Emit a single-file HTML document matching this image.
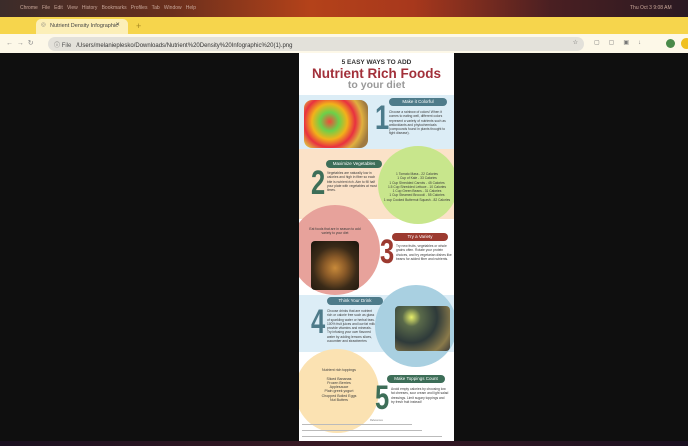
<!DOCTYPE html>
<html><head><meta charset="utf-8"><style>
*{margin:0;padding:0;box-sizing:border-box}
body{width:688px;height:446px;overflow:hidden;background:#0f0f0f;font-family:"Liberation Sans",sans-serif;position:relative}
.a{position:absolute}
.menu{left:0;top:0;width:688px;height:17px;background:linear-gradient(90deg,#3b2c2a 0%,#6a2f1c 25%,#b4421a 45%,#a8381c 60%,#4a1f22 80%,#2a1a22 100%);color:#c9a79a;font-size:5px;}
.tabs{left:0;top:17px;width:688px;height:17px;background:#f6d54c}
.tab{left:36px;top:19px;width:92px;height:15px;background:#fcefb8;border-radius:5px 5px 0 0;font-size:5.5px;color:#444;padding:4px 0 0 14px}
.bar{left:0;top:34px;width:688px;height:19px;background:#fdf8e8}
.url{left:48px;top:37px;width:536px;height:14px;background:#e3e1da;border-radius:7px;font-size:6px;color:#333;padding:3px 0 0 6px}
.pill{border-radius:5px;color:#fff;font-size:4.5px;text-align:center;line-height:8px;height:8px}
.num{font-family:"Liberation Sans",sans-serif;font-weight:bold;font-size:34px;line-height:30px;transform:scaleX(.75);transform-origin:left top}
.t{font-size:3.3px;color:#3a3a3a;line-height:4.3px}
</style></head><body>
<div class="a menu"><span style="position:absolute;left:20px;top:5px">Chrome&nbsp;&nbsp;&nbsp;File&nbsp;&nbsp;&nbsp;Edit&nbsp;&nbsp;&nbsp;View&nbsp;&nbsp;&nbsp;History&nbsp;&nbsp;&nbsp;Bookmarks&nbsp;&nbsp;&nbsp;Profiles&nbsp;&nbsp;&nbsp;Tab&nbsp;&nbsp;&nbsp;Window&nbsp;&nbsp;&nbsp;Help</span><span style="position:absolute;left:630px;top:5px">Thu Oct 3 9:08 AM</span></div>
<div class="a tabs"></div>
<div class="a tab">Nutrient Density Infographic<span style="position:absolute;right:8px;top:3px">✕</span><span style="position:absolute;left:5px;top:3px;color:#777">◎</span></div>
<div class="a" style="left:136px;top:21px;font-size:9px;color:#a88a20">+</div>
<div class="a bar"></div>
<div class="a" style="left:6px;top:39px;font-size:7px;color:#888">←&nbsp;&nbsp;→&nbsp;&nbsp;↻</div>
<div class="a url"><span style="color:#555">ⓘ File</span>&nbsp;&nbsp;&nbsp;/Users/melanieplesko/Downloads/Nutrient%20Density%20Infographic%20(1).png<span style="position:absolute;right:6px;top:2px;color:#666">☆</span></div>
<div class="a" style="left:594px;top:39px;font-size:6px;color:#777;letter-spacing:9px">▢▢▣↓</div>
<div class="a" style="left:666px;top:39px;width:9px;height:9px;border-radius:50%;background:#4a8a4a"></div>
<div class="a" style="left:681px;top:38px;width:11px;height:11px;border-radius:50%;background:#f0c020"></div>

<div class="a" style="left:299px;top:53px;width:155px;height:388px;background:#fff;overflow:hidden">
 <div class="a" style="left:0;top:42px;width:155px;height:54px;background:#dcedf6"></div>
 <div class="a" style="left:0;top:96px;width:155px;height:70px;background:#fbe2c8"></div>
 <div class="a" style="left:0;top:242px;width:155px;height:57px;background:#dcedf6"></div>
 <div class="a" style="left:79px;top:93px;width:80px;height:78px;border-radius:50%;background:#c8e68c"></div>
 <div class="a" style="left:-9px;top:152px;width:90px;height:90px;border-radius:50%;background:#e7a29b"></div>
 <div class="a" style="left:76px;top:232px;width:82px;height:82px;border-radius:50%;background:#a9d0e1"></div>
 <div class="a" style="left:-4px;top:296px;width:84px;height:84px;border-radius:50%;background:#fbe2b2"></div>

 <div class="a" style="left:0;top:6px;width:155px;text-align:center;font-weight:bold;font-size:6.5px;color:#333">5 EASY WAYS TO ADD</div>
 <div class="a" style="left:0;top:13px;width:155px;text-align:center;font-size:13.5px;color:#a2303a;font-weight:bold">Nutrient Rich Foods</div>
 <div class="a" style="left:0;top:26px;width:155px;text-align:center;font-size:10.5px;color:#999;font-weight:bold">to your diet</div>

 <div class="a" style="left:5px;top:47px;width:64px;height:48px;border-radius:8px;background:radial-gradient(circle at 40% 45%,#f04a3a 0,#6bd04a 20%,#f2b21a 38%,#e83040 55%,#e0b040 70%,#a07a40 85%);"></div>
 <div class="a num" style="left:76px;top:50px;color:#4c7b8b">1</div>
 <div class="a pill" style="left:90px;top:45px;width:58px;background:#4e7b8a">Make it Colorful</div>
 <div class="a t" style="left:90px;top:57px;width:62px">Choose a rainbow of colors! When it comes to eating well, different colors represent a variety of nutrients such as antioxidants and phytochemicals (compounds found in plants thought to fight disease).</div>

 <div class="a pill" style="left:27px;top:107px;width:56px;background:#3d6e58">Maximize Vegetables</div>
 <div class="a num" style="left:12px;top:115px;color:#3d6e58">2</div>
 <div class="a t" style="left:28px;top:118px;width:50px">Vegetables are naturally low in calories and high in fiber so each bite is nutrient rich. Aim to fill half your plate with vegetables at most times.</div>
 <div class="a t" style="left:84px;top:119px;width:68px;text-align:center">1 Tomato Mass - 22 Calories<br>1 Cup of Kale - 33 Calories<br>1 Cup Shredded Carrots - 45 Calories<br>1.5 Cup Shredded Lettuce - 10 Calories<br>1 Cup Green Beans - 31 Calories<br>1 Cup Steamed Broccoli - 55 Calories<br>1 cup Cooked Butternut Squash - 82 Calories</div>

 <div class="a t" style="left:9px;top:174px;width:54px;text-align:center">Eat foods that are in season to add variety to your diet</div>
 <div class="a" style="left:12px;top:188px;width:48px;height:49px;border-radius:4px;background:radial-gradient(circle at 50% 55%,#c88a3a 0,#8a5a28 30%,#3a2a18 60%,#1a140c 100%)"></div>
 <div class="a pill" style="left:93px;top:180px;width:56px;background:#9c3a30">Try a Variety</div>
 <div class="a num" style="left:81px;top:184px;color:#9c3a30">3</div>
 <div class="a t" style="left:97px;top:191px;width:56px">Try new fruits, vegetables or whole grains often. Rotate your protein choices, and try vegetarian dishes like beans for added fiber and nutrients.</div>

 <div class="a pill" style="left:28px;top:244px;width:56px;background:#4e7b8a">Think Your Drink</div>
 <div class="a num" style="left:12px;top:254px;color:#4e7b8a">4</div>
 <div class="a t" style="left:28px;top:256px;width:50px">Choose drinks that are nutrient rich or calorie free such as glass of sparkling water or herbal teas. 100% fruit juices and low fat milk provide vitamins and minerals. Try infusing your own flavored water by adding lemons slices, cucumber and strawberries</div>
 <div class="a" style="left:96px;top:253px;width:55px;height:45px;border-radius:4px;background:radial-gradient(circle at 30% 25%,#e8f06a 0,#5a6a4a 18%,#2e3a3a 50%,#8a7a4a 80%,#3a3a3a 100%)"></div>

 <div class="a t" style="left:4px;top:315px;width:72px;text-align:center;font-size:3.6px">Nutrient rich toppings<br><br>Sliced Bananas<br>Frozen Berries<br>Applesauce<br>Plain greek yogurt<br>Chopped Boiled Eggs<br>Nut Butters</div>
 <div class="a pill" style="left:88px;top:322px;width:58px;background:#3d6e58">Make Toppings Count</div>
 <div class="a num" style="left:76px;top:330px;color:#3d6e58">5</div>
 <div class="a t" style="left:92px;top:334px;width:58px">Avoid empty calories by choosing low fat cheeses, sour cream and light salad dressings. Limit sugary toppings and try fresh fruit instead!</div>

 <div class="a" style="left:0;top:366px;width:155px;text-align:center;font-size:2.5px;color:#777">References</div>
 <div class="a" style="left:3px;top:371px;width:110px;height:1px;background:#bbb"></div>
 <div class="a" style="left:3px;top:377px;width:120px;height:1px;background:#bbb"></div>
 <div class="a" style="left:3px;top:383px;width:140px;height:1px;background:#bbb"></div>
</div>
<div class="a" style="left:0;top:441px;width:688px;height:5px;background:linear-gradient(90deg,#1a1020,#3a1a24,#1a1020)"></div>
</body></html>
